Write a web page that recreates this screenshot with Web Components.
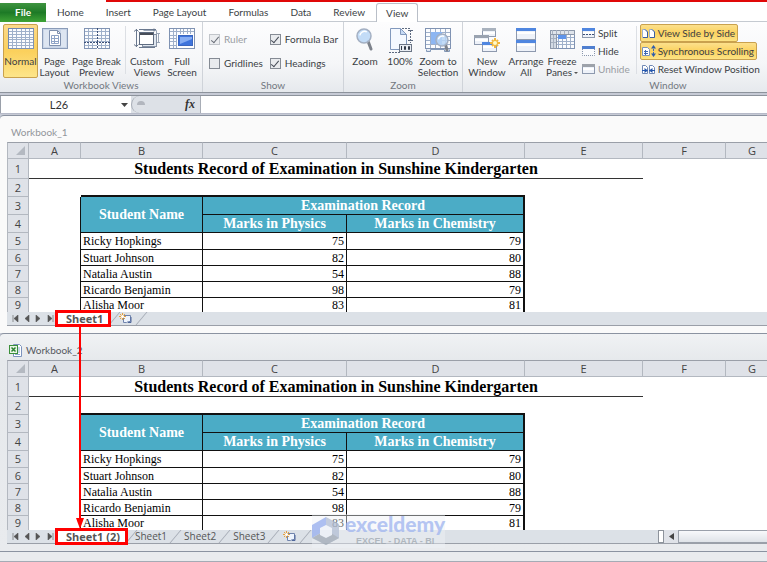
<!DOCTYPE html>
<html lang="en">
<head>
<meta charset="utf-8">
<title>Workbooks</title>
<style>
    html, body { height: 100%; }
    body { margin: 0; overflow: hidden; font: 10px/11px Lato, "Open Sans", sans-serif; color: #3b3f45; }
</style>
</head>
<body>
<excel-app></excel-app>

<script>
const win = (x, y, w, h, bar = '#4f86e0') => `
    <rect x="${x + .5}" y="${y + .5}" width="${w - 1}" height="${h - 1}" fill="#eef2f9" stroke="#8d99ae"/>
    <rect x="${x + 1}" y="${y + 4}" width="${w - 2}" height="2" fill="#fff"/>
    <rect x="${x}" y="${y}" width="${w}" height="3" fill="${bar}"/>`;

const grid = (x, y, w, h, cols, rows) => {
    let d = '';
    for (let i = 0; i <= cols; i++) d += `M${x + Math.round(w * i / cols) + .5} ${y}v${h}`;
    for (let i = 0; i <= rows; i++) d += `M${x} ${y + Math.round(h * i / rows) + .5}h${w}`;
    return `<rect x="${x}" y="${y}" width="${w}" height="${h}" fill="#fbfcfe"/><path d="${d}" stroke="#9fb0ca" fill="none"/>
        <rect x="${x + .5}" y="${y + .5}" width="${w}" height="${h}" fill="none" stroke="#8093b3"/>`;
};

const lens = (x, y, r, hx, hy) => `
    <path d="M${x + r * .6} ${y + r * .8}L${hx} ${hy}" stroke="#7d828b" stroke-width="3" stroke-linecap="round"/>
    <circle cx="${x}" cy="${y}" r="${r}" fill="#b9d6f6" fill-opacity=".85" stroke="#a3afc2" stroke-width="1.5"/>
    <path d="M${x - r * .6} ${y - r * .1}a${r * .7} ${r * .7} 0 0 1 ${r} ${-r * .5}" stroke="#fff" stroke-width="1.5" fill="none"/>`;

const star = (x, y) => `
    <path d="M${x} ${y - 5}v10M${x - 5} ${y}h10M${x - 3} ${y - 3}l6 6M${x + 3} ${y - 3}l-6 6" stroke="#f2b73c" stroke-width="2"/>
    <circle cx="${x}" cy="${y}" r="2" fill="#fffbc8"/>`;

// large icons are 26x25, small ones 14x12
const ICONS = {
    normal: grid(0, 0, 25, 20, 6, 7) + '<path d="M0 .5h26M.5 0v21" stroke="#6f87b0"/>',
    pageLayout: '<rect x=".5" y=".5" width="25" height="20" fill="#c9d5e7" stroke="#8a9bb8"/><path d="M2 2h5v17H2zM19 2h5v17h-5z" fill="#dde5f1"/><path d="M7.5 2.5h8l3 3v12h-11z" fill="#fff" stroke="#7f90ae"/><path d="M15.500 2.500v3h3" fill="none" stroke="#7f90ae"/><path d="M9.500 7.500h7v8h-7zM9 10.500h8M9 13.500h8M12.500 7v9" fill="none" stroke="#8ea3c6"/>',
    pageBreak: grid(0, 0, 25, 20, 6, 6) + '<path d="M13.500 0v21M0 14.500h26" stroke="#fff"/><path d="M13.500 0v21M0 14.500h26" stroke="#3c5078" stroke-dasharray="2 1"/>',
    customViews: '<path d="M9.500 2.500h13v14M23 5.500h3M23 14.500h3M24.500 5v10" fill="none" stroke="#9aa6b8"/><path d="M2.500 1v18M0 3.500l2.500-2 2 2M0 16.500l2.500 2 2-2M5 1.500h17M5 19.500h16M20 .5v3" fill="none" stroke="#6a788e"/><rect x="8.500" y="6.500" width="14" height="12" fill="#dfe6ef" stroke="#8591a4"/><rect x="5.500" y="4.500" width="14" height="12" fill="#fff" stroke="#5e6b80"/><path d="M6 6h13" stroke="#474d58" stroke-width="2"/>',
    fullScreen: grid(0, 0, 25, 20, 7, 6) + '<rect x="8" y="6" width="17" height="14" fill="#fff"/><rect x="9.500" y="7.500" width="14" height="10" fill="#3f74dc" stroke="#3a66c0"/><path d="M11 16l12-5V9H11z" fill="#86adf3"/>',
    zoom: lens(12, 8, 7, 19, 21),
    hundred: '<path d="M3.500.500h10l6 6v15h-16z" fill="#f5f9ff" stroke="#8299bd"/><path d="M13.500.500v6h6z" fill="#c7dbf5" stroke="#8299bd"/><path d="M2 24.500h11M15 .5h9M23.500 2v13" stroke="#5d6a80" stroke-dasharray="2 1"/><path d="M21 12.500h5M21 2.500h5" stroke="#5d6a80"/><rect x="12.500" y="16.500" width="12" height="7" fill="#e9edf3" stroke="#6c7686"/><path d="M14.500 18v4M17.500 18.500h1v3h-1zM21.500 18.500h1v3h-1z" stroke="#323a48" fill="none"/>',
    zoomSel: grid(0, 0, 25, 20, 5, 5) + '<rect x="6" y="4" width="11" height="12" fill="#8db6f2"/><path d="M1.500 21.500v2h4v-2h14v2h5v-2" fill="#dce4ef" stroke="#8298b8"/>' + lens(17, 12, 6, 22, 22),
    newWindow: win(8, 0, 14, 9, '#a9b2be') + win(0, 7, 15, 10, '#9aa3b0') + win(8, 14, 15, 10) + star(21, 15),
    arrange: win(3, 0, 20, 12) + win(3, 12, 20, 12),
    freeze: grid(1, 2, 24, 18, 6, 5) + '<path d="M1.500 2.500h24v4h-24z" fill="#dfe4eb" stroke="#8d98aa"/><path d="M1.500 6.500h6v14h-6z" fill="#d3dae4" stroke="#8d98aa"/><path d="M3.500 2v4M7.500 2v4M11.500 2v4M15.500 2v4M19.500 2v4M2 10.500h5M2 14.500h5M4.500 7v13" stroke="#a7b1c0"/><rect x="9" y="7" width="8" height="4" fill="#5f94ea"/>',
    split: win(0, 1, 13, 10) + '<path d="M1 7.500h11" stroke="#3c5078" stroke-dasharray="2 1"/>',
    hide: '<path d="M.500 4v6.500h12V4" fill="#fafbfd" stroke="#8795ab" stroke-dasharray="1 1"/><rect x="0" y="1" width="13" height="3" fill="#4f7fd0"/>',
    unhide: win(0, 1, 13, 10, '#9da2aa'),
    sideBySide: '<path d="M.500 2.500h3l2 2v6h-5zM7.500 2.500h3l2 2v6h-5z" fill="#fff" stroke="#9fb0cc"/><path d="M3 2.500l2.500 2.500v5.500H1M10 2.500l2.500 2.500v5.500H8" fill="none" stroke="#3e5f9c"/>',
    sync: '<path d="M.500 2.500h5l2 2v6h-7z" fill="#fff" stroke="#7a92bb"/><path d="M2 6.500h4M2 8.500h4M3.500 5v5" stroke="#3e68b4"/><path d="M11.500 1v10" stroke="#3e68b4" stroke-dasharray="2 1"/><path d="M9 3.500L11.500 0 14 3.500zM9 8.500l2.500 3.500L14 8.500z" fill="#2f5cab"/>',
    reset: '<path d="M.500 2.500h3l2 2v6h-5zM7.500 2.500h3l2 2v6h-5z" fill="#fff" stroke="#6f88b5"/><path d="M0 7.500h3M13 7.500h-3" stroke="#2456ad"/><path d="M2.500 5l3.500 2.500L2.500 10zM10.500 5L7 7.500l3.500 2.500z" fill="#2456ad"/>',
};

const icon = (name, w, h) => `<svg width="${w}" height="${h}" viewBox="0 0 ${w} ${h}" aria-hidden="true">${ICONS[name]}</svg>`;

class ExcelElement extends HTMLElement {
    connectedCallback() {
        this.attachShadow({ mode: 'open' }).innerHTML = `<style>${this.css()}</style>${this.html()}`;
    }
}

// button with the icon on top and the label in one or two lines
class BigButton extends ExcelElement {
    css() {
        return `
            :host { display: block; width: var(--w, 36px); }
            button {
                display: flex; flex-direction: column; align-items: center; gap: 3px;
                box-sizing: border-box; width: 100%; height: 54px; padding: 3px 0 0;
                border: 1px solid transparent; border-radius: 2px; background: none;
                font: inherit; color: inherit; text-align: center; white-space: nowrap;
            }
            :host([active]) button { background: linear-gradient(#fcd98a, #fbd05c 50%, #fde58a); border-color: #c9a14e; }
            svg { flex: none; }
            .label { white-space: pre; }
            .drop { display: inline-block; margin-left: 2px; border: 2px solid transparent; border-top-color: #555; border-bottom: 0; vertical-align: middle; }
        `;
    }
    html() {
        const label = this.getAttribute('label').replace('|', '\n');
        const drop = this.hasAttribute('menu') ? '<i class="drop"></i>' : '';
        return `<button>${icon(this.getAttribute('icon'), 26, 25)}<span class="label">${label}${drop}</span></button>`;
    }
}
customElements.define('big-button', BigButton);

class SmallButton extends ExcelElement {
    css() {
        return `
            :host { display: block; }
            button {
                display: flex; align-items: center; gap: 2px; height: 18px; padding: 0 2px 0 1px;
                border: 1px solid transparent; border-radius: 2px; background: none;
                font: inherit; color: inherit; white-space: nowrap;
            }
            :host([active]) button { background: linear-gradient(#fce08c, #fbd25f 50%, #fde384); border-color: #c9a14e; }
            button:disabled { color: #9a9da3; }
        `;
    }
    html() {
        const off = this.hasAttribute('disabled') ? 'disabled' : '';
        return `<button ${off}>${icon(this.getAttribute('icon'), 14, 12)}<span>${this.getAttribute('label')}</span></button>`;
    }
}
customElements.define('small-button', SmallButton);

class CheckItem extends ExcelElement {
    css() {
        return `
            :host { display: block; }
            label { display: flex; align-items: center; gap: 4px; height: 24px; white-space: nowrap; }
            input {
                appearance: none; display: grid; place-items: center; box-sizing: border-box;
                width: 11px; height: 11px; margin: 0; border: 1px solid #858b94; background: #e9ebee;
            }
            input:checked::before {
                content: ""; box-sizing: border-box; width: 4px; height: 8px; margin-bottom: 2px;
                border: solid #454b56; border-width: 0 1px 1px 0; transform: rotate(40deg);
            }
            :host([disabled]) label { color: #9a9da3; }
            :host([disabled]) input { border-color: #b4b8be; opacity: .8; }
        `;
    }
    html() {
        const on = this.hasAttribute('checked') ? 'checked' : '';
        const off = this.hasAttribute('disabled') ? 'disabled' : '';
        return `<label><input type="checkbox" ${on} ${off}>${this.getAttribute('label')}</label>`;
    }
}
customElements.define('check-item', CheckItem);

class RibbonGroup extends ExcelElement {
    css() {
        return `
            :host {
                display: flex; flex-direction: column; justify-content: space-between; flex: none;
                box-sizing: border-box; padding: 2px 3px 1px; border-right: 1px solid #cfd3d9;
            }
            :host(:last-child) { min-width: 410px; border-right: 0; }
            .items { display: flex; }
            .caption { text-align: center; color: #72787f; }
        `;
    }
    html() {
        return `<div class="items"><slot></slot></div><div class="caption">${this.getAttribute('caption')}</div>`;
    }
}
customElements.define('ribbon-group', RibbonGroup);

class RibbonTabs extends ExcelElement {
    css() {
        return `
            :host { display: block; padding-top: 3px; background: #fff; }
            nav { display: flex; height: 19px; box-shadow: inset 0 -1px #c5cad1; }
            a {
                display: flex; align-items: center; justify-content: center; box-sizing: border-box;
                padding: 0 11px; color: inherit; text-decoration: none; white-space: nowrap;
            }
            .file { width: 46px; padding: 0; background: linear-gradient(#3f9440, #1d7a26 50%, #3fa336); color: #fff; font-weight: bold; }
            .current { border: 1px solid #b9bfc8; border-bottom: 0; border-radius: 3px 3px 0 0; background: #fff; padding: 0 9px; }
            .line { position: absolute; top: 0; left: 106px; right: 0; height: 2px; background: #e00808; }
        `;
    }
    html() {
        const tabs = ['Home', 'Insert', 'Page Layout', 'Formulas', 'Data', 'Review'];
        return `
            <div class="line"></div>
            <nav>
                <a class="file" href="#">File</a>
                ${tabs.map(t => `<a href="#">${t}</a>`).join('')}
                <a class="current" href="#">View</a>
            </nav>`;
    }
}
customElements.define('ribbon-tabs', RibbonTabs);

class ViewRibbon extends ExcelElement {
    css() {
        return `
            :host {
                display: flex; height: 70px; overflow: hidden; background: linear-gradient(#fdfdfe, #f5f6f8 60%, #e6e9ed);
                border-bottom: 1px solid #8d939c;
            }
            .rule { width: 1px; height: 48px; margin: 2px 3px; background: #dcdfe4; }
            .checks { display: grid; grid-template-columns: auto auto; gap: 0 7px; padding: 3px 2px 0 3px; align-content: start; }
            .stack { display: grid; align-content: start; }
        `;
    }
    html() {
        return `
            <ribbon-group caption="Workbook Views">
                <big-button icon="normal" label="Normal" active style="--w: 35px"></big-button>
                <big-button icon="pageLayout" label="Page|Layout" style="--w: 33px"></big-button>
                <big-button icon="pageBreak" label="Page Break|Preview" style="--w: 51px"></big-button>
                <div class="rule"></div>
                <big-button icon="customViews" label="Custom|Views"></big-button>
                <big-button icon="fullScreen" label="Full|Screen" style="--w: 34px"></big-button>
            </ribbon-group>
            <ribbon-group caption="Show">
                <div class="checks">
                    <check-item label="Ruler" checked disabled></check-item>
                    <check-item label="Formula Bar" checked></check-item>
                    <check-item label="Gridlines"></check-item>
                    <check-item label="Headings" checked></check-item>
                </div>
            </ribbon-group>
            <ribbon-group caption="Zoom">
                <big-button icon="zoom" label="Zoom"></big-button>
                <big-button icon="hundred" label="100%" style="--w: 34px"></big-button>
                <big-button icon="zoomSel" label="Zoom to|Selection" style="--w: 42px"></big-button>
            </ribbon-group>
            <ribbon-group caption="Window">
                <big-button icon="newWindow" label="New|Window" style="--w: 42px"></big-button>
                <big-button icon="arrange" label="Arrange|All"></big-button>
                <big-button icon="freeze" label="Freeze|Panes" menu></big-button>
                <div class="stack">
                    <small-button icon="split" label="Split"></small-button>
                    <small-button icon="hide" label="Hide"></small-button>
                    <small-button icon="unhide" label="Unhide" disabled></small-button>
                </div>
                <div class="rule"></div>
                <div class="stack">
                    <small-button icon="sideBySide" label="View Side by Side" active></small-button>
                    <small-button icon="sync" label="Synchronous Scrolling" active></small-button>
                    <small-button icon="reset" label="Reset Window Position"></small-button>
                </div>
            </ribbon-group>`;
    }
}
customElements.define('view-ribbon', ViewRibbon);

class FormulaBar extends ExcelElement {
    css() {
        return `
            :host { display: flex; height: 17px; border-top: 1px solid #8d939c; border-bottom: 1px solid #b6bac8; margin-top: 2px; background: #dde1e7; }
            input { box-sizing: border-box; min-width: 0; border: 0; margin: 0; padding: 0; font: inherit; font-size: 11px; background: #fff; color: #333; }
            .name { width: 117px; text-align: center; border-left: 1px solid #9aa0aa; }
            .drop { width: 14px; padding: 0; border: 0; background: #fff; }
            .drop svg { display: block; margin: auto; }
            .tools { display: flex; align-items: center; justify-content: space-between; box-sizing: border-box; width: 70px; padding: 0 5px; border: 1px solid #a8adb6; border-width: 0 1px; border-radius: 9px 0 0 9px; }
            .dot { width: 8px; height: 8px; border-radius: 50%; background: linear-gradient(#b2b6be 50%, #dfe2e7 50%); }
            .fx { padding: 0; border: 0; background: none; font: italic bold 12px "Liberation Serif", serif; color: #333; }
            .formula { flex: 1; }
        `;
    }
    html() {
        return `
            <input class="name" aria-label="Name box" value="L26">
            <button class="drop" aria-label="Names"><svg width="7" height="4"><path d="M0 0h7L3.500 4z" fill="#444"/></svg></button>
            <div class="tools"><span class="dot"></span><button class="fx">fx</button></div>
            <input class="formula" aria-label="Formula">`;
    }
}
customElements.define('formula-bar', FormulaBar);

const STUDENTS = [
    ['Ricky Hopkings', 75, 79],
    ['Stuart Johnson', 82, 80],
    ['Natalia Austin', 54, 88],
    ['Ricardo Benjamin', 98, 79],
    ['Alisha Moor', 83, 81],
];

class SheetGrid extends ExcelElement {
    css() {
        return `
            :host { display: block; overflow: hidden; background: #fff; }
            /* the last column runs past the edge of the window */
            table { table-layout: fixed; width: calc(100% + 12px); border-collapse: separate; border-spacing: 0; font: 12px/14px "Liberation Serif", serif; color: #000; }
            th, td { box-sizing: border-box; height: 16px; padding: 0 2px; white-space: nowrap; }
            tr.first > * { height: 17px; }
            tr.tall > * { height: 18px; }
            tr.title > * { height: 20px; }
            .head th { height: 17px; border-top: 1px solid #9a9fa8; }
            .head th, .num { background: #dfe2e8; border-right: 1px solid #b3b8c0; border-bottom: 1px solid #b3b8c0; font: 11px/14px "Open Sans", sans-serif; color: #444; padding: 0; }
            .head th:first-child, .num { border-left: 1px solid #b3b8c0; }
            .head svg { display: block; margin: 0 3px 0 auto; }
            .title td[colspan] { border-bottom: 1px solid #333; font-size: 16px; font-weight: bold; text-align: center; }
            .band { background: #4bacc6; color: #fff; font-size: 14px; font-weight: bold; text-align: center; }
            .band, .cell { border-right: 1px solid #111; border-bottom: 1px solid #111; }
            .lead { border-right: 1px solid #111; }
            .top { border-bottom: 2px solid #111; }
            .end { border-right-width: 2px; }
            .mark { text-align: right; }
            tr:last-child > * { height: 14px; border-bottom: 0; }
        `;
    }
    html() {
        const rows = STUDENTS.map(([name, physics, chemistry], i) => `
            <tr class="${i ? '' : 'first'}">
                <th class="num">${i + 5}</th><td class="lead"></td>
                <td class="cell">${name}</td><td class="cell mark">${physics}</td><td class="cell mark end">${chemistry}</td>
            </tr>`).join('');
        return `
            <table>
                <colgroup>
                    <col style="width: 22px"><col style="width: 52px"><col style="width: 122px"><col style="width: 144px">
                    <col style="width: 178px"><col style="width: 118px"><col style="width: 83px"><col>
                </colgroup>
                <tr class="head">
                    <th><svg width="9" height="9"><path d="M9 0v9H0z" fill="#b4b9c1"/></svg></th>
                    <th>A</th><th>B</th><th>C</th><th>D</th><th>E</th><th>F</th><th>G</th>
                </tr>
                <tr class="title"><th class="num">1</th><td colspan="5">Students Record of Examination in Sunshine Kindergarten</td></tr>
                <tr class="tall"><th class="num">2</th><td></td><td class="top" colspan="3"></td></tr>
                <tr class="tall"><th class="num">3</th><td class="lead"></td><td class="band" rowspan="2">Student Name</td><td class="band end" colspan="2">Examination Record</td></tr>
                <tr class="tall"><th class="num">4</th><td class="lead"></td><td class="band">Marks in Physics</td><td class="band end">Marks in Chemistry</td></tr>
                ${rows}
            </table>`;
    }
}
customElements.define('sheet-grid', SheetGrid);

class SheetTabs extends ExcelElement {
    css() {
        return `
            :host { display: flex; height: 14px; background: #dce1e7; border-bottom: 1px solid #9a9fa8; box-sizing: border-box; font: 10px/13px "Open Sans", sans-serif; }
            .nav { display: flex; align-items: center; justify-content: space-between; width: 42px; padding: 0 3px 0 5px; }
            .nav button, .new { padding: 0; border: 0; background: none; display: flex; }
            .tab { display: flex; align-items: center; height: 13px; padding: 0 9px 0 8px; color: #555; text-decoration: none; white-space: nowrap; position: relative; }
            .tab:not(.current)::after, .new::after, .current + ::before {
                content: ""; height: 13px; width: 1px; background: #a3a9b3; position: absolute; right: 0; top: 0; transform: skewX(-40deg);
            }
            .current + ::before { right: auto; left: 4px; }
            .current { padding: 0 6px 0 9px; background: #fff; font-size: 11px; font-weight: bold; outline: 3px solid #f00; outline-offset: -1px; z-index: 1; }
            .current + * { margin-left: 1px; }
            .new { position: relative; align-items: center; padding: 0 9px; }
            .scroll { display: flex; flex: 1; justify-content: flex-end; }
            .split { box-sizing: border-box; width: 6px; border: 1px solid #8d939c; background: #fff; }
            .left { width: 14px; padding: 0; border: 0; background: #dfe2e8; }
            .left svg { display: block; margin: auto; }
            .thumb { box-sizing: border-box; width: 89px; border: 1px solid #9aa0aa; border-right: 0; background: linear-gradient(#f8f9fb, #dfe3e8); }
        `;
    }
    html() {
        const names = this.getAttribute('names').split(',');
        const arrows = ['M1 0v7M6 0v7L2 3.500z', 'M5 0v7L1 3.500z', 'M1 0v7l4-3.500z', 'M1 0v7l4-3.500zM6 0v7'];
        return `
            <div class="nav">${arrows.map(d => `<button aria-label="Scroll tabs"><svg width="7" height="7"><path d="${d}" fill="#555" stroke="#555" stroke-width=".6"/></svg></button>`).join('')}</div>
            ${names.map((n, i) => `<a class="tab ${i ? '' : 'current'}" href="#">${n}</a>`).join('')}
            <button class="new" aria-label="Insert sheet">
                <svg width="14" height="11"><path d="M4.500 2.500h7v6h-2l-2 1h-3z" fill="#eef4fd" stroke="#7084ad"/><path d="M12 4v5.500H9" fill="none" stroke="#4e669a"/><path d="M3.500 0v7M0 3.500h7M1 1l5 5M6 1L1 6" stroke="#e8a13a"/><circle cx="3.500" cy="3.500" r="1.500" fill="#fff"/></svg>
            </button>
            ${this.hasAttribute('scroll') ? `
            <div class="scroll">
                <span class="split"></span>
                <button class="left" aria-label="Scroll left"><svg width="5" height="7"><path d="M5 0v7L0 3.500z" fill="#444"/></svg></button>
                <span class="thumb"></span>
            </div>` : ''}`;
    }
}
customElements.define('sheet-tabs', SheetTabs);

class WorkbookWindow extends ExcelElement {
    css() {
        return `
            :host {
                display: flex; flex-direction: column; min-height: 0; box-sizing: border-box;
                padding: 0 0 7px 7px; border-top: 1px solid #8b93a1; border-radius: 4px 0 0 0; background: #fafafa; color: #92969a;
            }
            :host([active]) { background: linear-gradient(#f0f2f4, #e6e9ec 26px, #e9ebee); color: #55595f; }
            header { display: flex; align-items: center; gap: 4px; height: 26px; padding: 6px 0 0 4px; box-sizing: border-box; flex: none; }
            :host([active]) header { padding-left: 2px; }
            sheet-grid { flex: 1; min-height: 0; }
            sheet-tabs { flex: none; }
        `;
    }
    html() {
        const active = this.hasAttribute('active');
        const logo = '<svg width="13" height="13"><path d="M4.500.500h6l2 2v10h-8z" fill="#fff" stroke="#7c93bd"/><path d="M8 4h3M8 6h3M8 8h3M6 10.500h5" stroke="#8fa9d3"/><rect x=".5" y="1.500" width="8" height="8" fill="#eaf6e6" stroke="#3b8f3a"/><path d="M2.500 3.500l4 4M6.500 3.500l-4 4" stroke="#2a8230" stroke-width="1.500"/></svg>';
        return `
            <header>${active ? logo : ''}<span>${this.getAttribute('name')}</span></header>
            <sheet-grid></sheet-grid>
            <sheet-tabs names="${this.getAttribute('sheets')}" ${active ? 'scroll' : ''}></sheet-tabs>`;
    }
}
customElements.define('workbook-window', WorkbookWindow);

// red arrow laid over both windows, from one sheet tab to the other
class SheetArrow extends ExcelElement {
    css() {
        return `
            :host { position: absolute; left: 76px; top: 211px; bottom: 22px; width: 8px; display: flex; flex-direction: column; align-items: center; pointer-events: none; }
            .shaft { flex: 1; width: 2px; background: #f00; }
            svg { flex: none; }
        `;
    }
    html() {
        return '<div class="shaft"></div><svg width="8" height="11"><path d="M0 0h8L4 11z" fill="#f00"/></svg>';
    }
}
customElements.define('sheet-arrow', SheetArrow);

class SiteMark extends ExcelElement {
    css() {
        return `
            :host { position: absolute; left: 312px; bottom: 3px; display: flex; align-items: center; gap: 5px; background: rgba(240, 243, 248, .5); opacity: .85; pointer-events: none; }
            strong { display: block; font: 900 21px/20px Lato, sans-serif; color: #a9bcf0; }
            small { display: block; font: bold 9px/14px "Liberation Sans", sans-serif; color: #a8b0b8; text-align: center; }
        `;
    }
    html() {
        return `
            <svg width="28" height="30" viewBox="0 0 28 30"><path d="M14 1l13 7v14l-13 7-6-3V14z" fill="#b9c4d8"/><path d="M0 9L14 1v13L0 22z" fill="#9fb5ef"/><path d="M0 22l14-8 13 8-13 7z" fill="#a9b2bd"/><path d="M14 9l6 3v7l-6 3-6-3v-7z" fill="#eef2f9"/></svg>
            <div><strong>exceldemy</strong><small>EXCEL - DATA - BI</small></div>`;
    }
}
customElements.define('site-mark', SiteMark);

class ExcelApp extends ExcelElement {
    css() {
        return `
            :host { display: flex; flex-direction: column; height: 100vh; background: #c6cad5; }
            main { position: relative; flex: 1; min-height: 0; display: grid; grid-template-rows: 1fr 1fr; margin-top: 1px; }
            footer { height: 9px; background: #e9ebee; border-top: 1px solid #8b93a1; border-bottom: 1px solid #a5abb5; }
        `;
    }
    html() {
        return `
            <ribbon-tabs></ribbon-tabs>
            <view-ribbon></view-ribbon>
            <formula-bar></formula-bar>
            <main>
                <workbook-window name="Workbook_1" sheets="Sheet1"></workbook-window>
                <workbook-window name="Workbook_2" sheets="Sheet1 (2),Sheet1,Sheet2,Sheet3" active></workbook-window>
                <sheet-arrow></sheet-arrow>
                <site-mark></site-mark>
            </main>
            <footer></footer>`;
    }
}
customElements.define('excel-app', ExcelApp);
</script>
</body>
</html>
